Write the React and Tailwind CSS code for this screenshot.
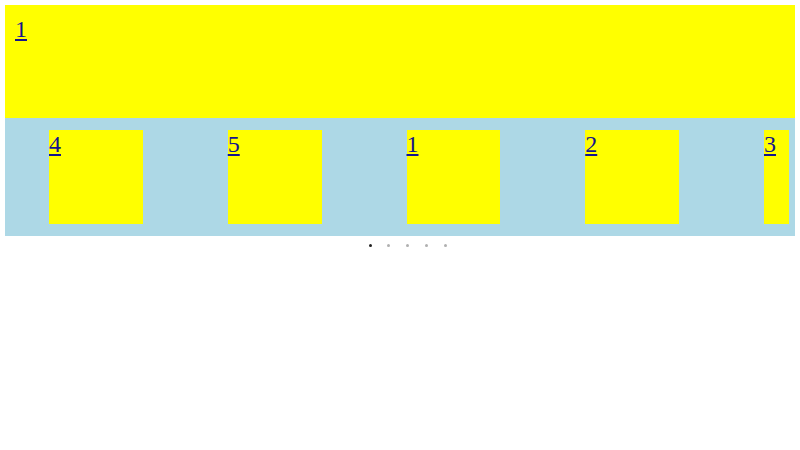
import React from "react";

const thumbs = ["4", "5", "1", "2", "3"];

export default function App() {
    return (
        <div className="w-[800px] h-[450px] bg-white p-[5px] font-['Liberation_Serif',serif]">
            {/* main slide */}
            <div className="h-[113px] bg-[#ffff00] px-[10px] pt-[10px]">
                <a href="#" className="text-[24px] leading-[28px] text-[#14148c] underline">
                    1
                </a>
            </div>

            {/* thumbnail strip */}
            <div className="h-[118px] bg-[#add8e6] px-[6px] pt-[12px]">
                <div className="overflow-hidden">
                    <div className="flex gap-[85px] pl-[38px]">
                        {thumbs.map((t, i) => (
                            <div
                                key={i}
                                className="w-[93.75px] h-[94px] shrink-0 bg-[#ffff00]"
                            >
                                <a href="#" className="text-[24px] leading-[28px] text-[#14148c] underline">
                                    {t}
                                </a>
                            </div>
                        ))}
                    </div>
                </div>
            </div>

            {/* pager dots */}
            <div className="flex justify-center gap-[15.75px] pt-[8px] pl-[15px]">
                {thumbs.map((t, i) => (
                    <span
                        key={i}
                        className={
                            i === 0
                                ? "w-[3px] h-[3px] rounded-full bg-[#222]"
                                : "w-[3px] h-[3px] rounded-full bg-[#b0b0b0]"
                        }
                    />
                ))}
            </div>
        </div>
    );
}
